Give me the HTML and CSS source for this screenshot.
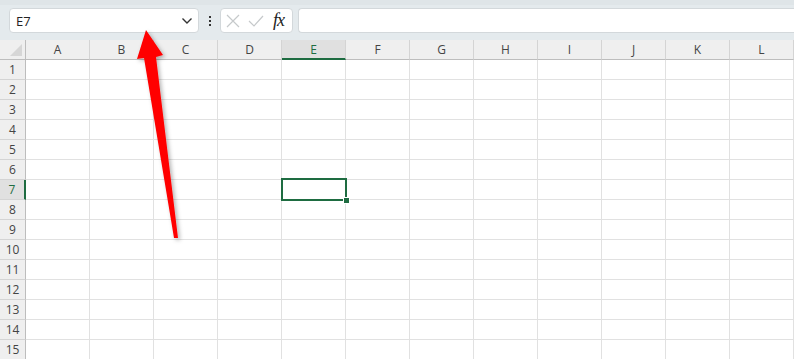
FILE: index.html
```html
<!DOCTYPE html>
<html lang="en">
<head>
    <meta charset="UTF-8">
    <title>Name Box</title>
    <link rel="stylesheet" href="styles.css">
</head>
<body>
    <div class="toolbar">
        <div class="name-box">
            <span>E7</span>
            <svg width="12" height="8" viewBox="0 0 12 8"><path d="M1.5 1.5 L6 6 L10.5 1.5" fill="none" stroke="#333" stroke-width="1.4"/></svg>
        </div>
        <div class="more-dots"><i></i><i></i><i></i></div>
        <div class="fx-box">
            <svg width="14" height="14" viewBox="0 0 14 14"><path d="M1 1 L13 13 M13 1 L1 13" stroke="#c6c9cb" stroke-width="1.2"/></svg>
            <svg width="16" height="14" viewBox="0 0 16 14"><path d="M1 7 L6 12 L15 2" fill="none" stroke="#c6c9cb" stroke-width="1.2"/></svg>
            <span class="fx"><i>f</i><i>x</i></span>
        </div>
        <div class="formula-input"></div>
    </div>

    <div class="sheet" id="sheet"></div>

    <svg class="arrow" width="794" height="359" viewBox="0 0 794 359">
        <defs>
            <filter id="shadow" x="-50%" y="-20%" width="200%" height="140%">
                <feDropShadow dx="2" dy="2" stdDeviation="2" flood-color="#000" flood-opacity="0.3"/>
            </filter>
        </defs>
        <polygon points="146,30 163,55 156,57 178,238 174,238 144,58 137,59" fill="#ff0000" filter="url(#shadow)"/>
    </svg>

    <script>
        // build the spreadsheet grid
        const sheet = document.getElementById('sheet');
        const cols = ['A','B','C','D','E','F','G','H','I','J','K','L'];
        let html = '<div class="corner"><span></span></div>';
        cols.forEach(c => {
            html += `<div class="col-head${c === 'E' ? ' active' : ''}">${c}</div>`;
        });
        for (let r = 1; r <= 15; r++) {
            html += `<div class="row-head${r === 7 ? ' active' : ''}">${r}</div>`;
            cols.forEach(c => {
                const sel = (c === 'E' && r === 7);
                html += `<div class="cell${sel ? ' selected' : ''}">${sel ? '<div class="selection"><span></span></div>' : ''}</div>`;
            });
        }
        sheet.innerHTML = html;
    </script>
</body>
</html>
```

FILE: styles.css
```css
* {
    margin: 0;
    padding: 0;
    box-sizing: border-box;
}

body {
    font-family: 'Open Sans', 'Noto Sans', sans-serif;
    background-color: white;
    color: #333;
    width: 794px;
    height: 359px;
    overflow: hidden;
    position: relative;
}

.toolbar {
    height: 40px;
    background-color: #e4eaed;
    border-top: 5px solid #dfe5e8;
    display: flex;
    align-items: flex-start;
    padding: 3px 0 0 9px;
}

.name-box {
    width: 190px;
    height: 25px;
    background-color: white;
    border: 1px solid #d3d8db;
    border-radius: 4px;
    display: flex;
    align-items: center;
    justify-content: space-between;
    padding: 0 5px 0 6px;
    font-size: 13px;
    color: #222;
}

.more-dots {
    width: 21px;
    height: 25px;
    display: flex;
    flex-direction: column;
    align-items: center;
    justify-content: center;
    gap: 2px;
}

.more-dots i {
    width: 2px;
    height: 2px;
    background-color: #333;
}

.fx-box {
    width: 73px;
    height: 25px;
    background-color: white;
    border: 1px solid #d3d8db;
    border-radius: 4px;
    display: flex;
    align-items: center;
    padding: 0 0 0 5px;
    gap: 8px;
}

.fx {
    font-family: 'Liberation Serif', serif;
    font-size: 18px;
    color: #222;
    margin-left: 1px;
    letter-spacing: -1px;
}

.formula-input {
    flex: 1;
    height: 25px;
    margin-left: 5px;
    background-color: white;
    border: 1px solid #d3d8db;
    border-right: none;
    border-radius: 4px 0 0 4px;
}

.sheet {
    display: grid;
    grid-template-columns: 26px repeat(12, 64px);
    grid-auto-rows: 20px;
    font-size: 12px;
}

.corner,
.col-head,
.row-head {
    background-color: #efefef;
    color: #444;
    display: flex;
    align-items: center;
    justify-content: center;
}

.corner {
    border-right: 1px solid #bdbdbd;
    border-bottom: 1px solid #bdbdbd;
    position: relative;
}

.corner span {
    position: absolute;
    right: 3px;
    bottom: 3px;
    width: 0;
    height: 0;
    border-left: 12px solid transparent;
    border-bottom: 12px solid #d6d6d6;
}

.col-head {
    border-right: 1px solid #d4d4d4;
    border-bottom: 1px solid #bdbdbd;
}

.col-head.active {
    background-color: #e0e0e0;
    color: #1e6c41;
    border-bottom: 2px solid #1e6c41;
}

.row-head {
    border-right: 1px solid #bdbdbd;
    border-bottom: 1px solid #d4d4d4;
}

.row-head.active {
    background-color: #e0e0e0;
    color: #1e6c41;
    border-right: 2px solid #1e6c41;
}

.cell {
    border-right: 1px solid #e1e1e1;
    border-bottom: 1px solid #e1e1e1;
    position: relative;
}

.cell.selected {
    z-index: 2;
}

.selection {
    position: absolute;
    left: -1px;
    top: -2px;
    width: 66px;
    height: 23px;
    border: 2px solid #1e6c41;
}

.selection span {
    position: absolute;
    right: -5px;
    bottom: -5px;
    width: 7px;
    height: 7px;
    background-color: #1e6c41;
    border: 1px solid white;
}

.arrow {
    position: absolute;
    left: 0;
    top: 0;
    z-index: 5;
    pointer-events: none;
}
```
